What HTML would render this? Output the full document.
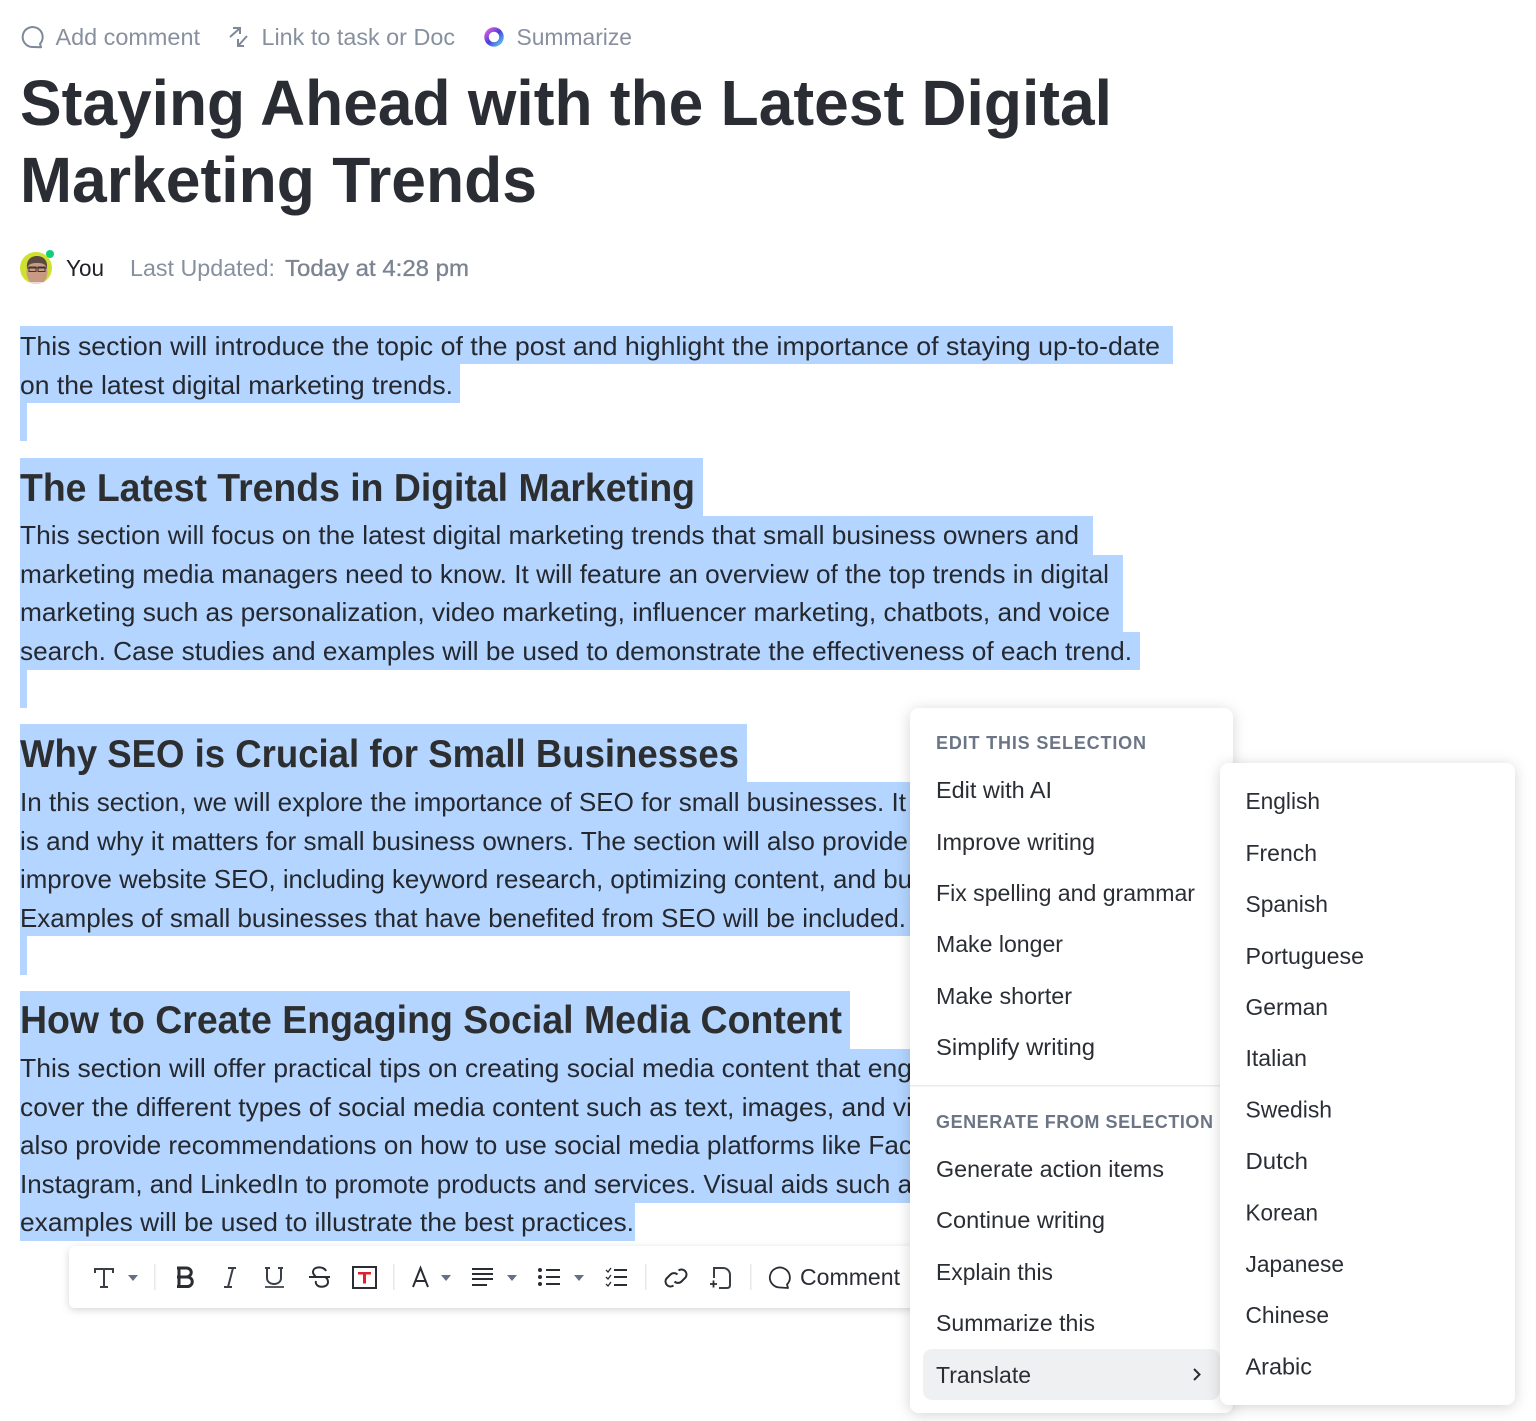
<!DOCTYPE html>
<html lang="en"><head><meta charset="utf-8"><title>Staying Ahead</title>
<style>
html,body{margin:0;padding:0;background:#fff;width:1536px;height:1421px;overflow:hidden}
svg{display:block}
text{font-family:"Liberation Sans",sans-serif}
.b{font-size:26px;fill:#25282e}
.h{font-size:39px;font-weight:700;fill:#2d2e30}
.t{font-size:64px;font-weight:700;fill:#2a2e34}
.g{font-size:23px;fill:#87909e}
.m{font-size:23px;fill:#2a2e34}
.c{font-size:18px;font-weight:700;fill:#6b7586}
</style></head><body>
<svg width="1536" height="1421" viewBox="0 0 1536 1421" xmlns="http://www.w3.org/2000/svg">
<defs>
<filter id="sh" x="-15%" y="-15%" width="130%" height="130%"><feDropShadow dx="0" dy="2" stdDeviation="7" flood-color="#000" flood-opacity=".17"/></filter>
<filter id="sb" x="-5%" y="-30%" width="110%" height="170%"><feDropShadow dx="0" dy="2" stdDeviation="4" flood-color="#000" flood-opacity=".16"/></filter>
<linearGradient id="ai" x1="0" y1="0" x2="1" y2="1"><stop offset="0" stop-color="#e35fe0"/><stop offset=".5" stop-color="#4a3fd8"/><stop offset="1" stop-color="#57c8f2"/></linearGradient>
<clipPath id="av"><circle cx="36" cy="268" r="16"/></clipPath>
</defs>
<rect width="1536" height="1421" fill="#fff"/>

<!-- top actions -->
<path d="M33 47a10 10 0 1 1 7-3.200l1 3.500z" fill="none" stroke="#7f8897" stroke-width="2" stroke-linejoin="round"/>
<text class="g" x="55.500" y="45" textLength="144.500" lengthAdjust="spacingAndGlyphs">Add comment</text>
<path d="M230 37l9-8M233 28h7v6M247 36l-9 10M238 39v7h6" fill="none" stroke="#7f8897" stroke-width="2"/>
<text class="g" x="261.500" y="45" textLength="193.500" lengthAdjust="spacingAndGlyphs">Link to task or Doc</text>
<circle cx="494" cy="37" r="7.500" fill="none" stroke="url(#ai)" stroke-width="4.500"/>
<text class="g" x="516.500" y="45" textLength="115.500" lengthAdjust="spacingAndGlyphs">Summarize</text>

<!-- title -->
<text class="t" x="20" y="125" textLength="1092" lengthAdjust="spacingAndGlyphs">Staying Ahead with the Latest Digital</text>
<text class="t" x="20" y="202" textLength="517" lengthAdjust="spacingAndGlyphs">Marketing Trends</text>

<!-- author -->
<circle cx="36" cy="268" r="16" fill="#cfe030"/>
<g clip-path="url(#av)">
<ellipse cx="37" cy="272" rx="10.500" ry="13" fill="#c99a82"/>
<path d="M27 268c-1-9 5-12 10-12s11 3 10 12c-2-4-4-5-10-5s-8 1-10 5z" fill="#5a4a40"/>
<path d="M27 268h20" stroke="#3a3636" stroke-width="1"/>
<rect x="29" y="267" width="7" height="4.500" fill="none" stroke="#3a3636" stroke-width="1"/><rect x="38" y="267" width="7" height="4.500" fill="none" stroke="#3a3636" stroke-width="1"/>
<path d="M26 282h22v3H26z" fill="#e8dcd6"/>
</g>
<circle cx="50" cy="254" r="4" fill="#0fcf7c"/>
<text x="66" y="276" font-size="23" fill="#1f2126" textLength="38" lengthAdjust="spacingAndGlyphs">You</text>
<text class="g" x="130" y="276" textLength="145" lengthAdjust="spacingAndGlyphs">Last Updated:</text>
<text x="285" y="276" font-size="23" fill="#7c8492" stroke="#7c8492" stroke-width=".35" textLength="184" lengthAdjust="spacingAndGlyphs">Today at 4:28 pm</text>

<!-- selection -->
<g fill="#b3d5ff">
<rect x="20" y="326" width="1153" height="38"/>
<rect x="20" y="364" width="440" height="39"/>
<rect x="20" y="403" width="7" height="38"/>
<rect x="20" y="458" width="683" height="58"/>
<rect x="20" y="516" width="1073" height="39"/>
<rect x="20" y="555" width="1103" height="77"/>
<rect x="20" y="632" width="1120" height="38"/>
<rect x="20" y="670" width="7" height="38"/>
<rect x="20" y="724" width="727" height="58"/>
<rect x="20" y="782" width="900" height="154"/>
<rect x="20" y="936" width="7" height="39"/>
<rect x="20" y="991" width="830" height="58"/>
<rect x="20" y="1049" width="900" height="154"/>
<rect x="20" y="1203" width="615" height="38"/>
</g>

<!-- body -->
<text class="b" x="20" y="355" textLength="1140" lengthAdjust="spacingAndGlyphs">This section will introduce the topic of the post and highlight the importance of staying up-to-date</text>
<text class="b" x="20" y="394" textLength="433" lengthAdjust="spacingAndGlyphs">on the latest digital marketing trends.</text>
<text class="h" x="20" y="501" textLength="675" lengthAdjust="spacingAndGlyphs">The Latest Trends in Digital Marketing</text>
<text class="b" x="20" y="544" textLength="1059" lengthAdjust="spacingAndGlyphs">This section will focus on the latest digital marketing trends that small business owners and</text>
<text class="b" x="20" y="583" textLength="1089" lengthAdjust="spacingAndGlyphs">marketing media managers need to know. It will feature an overview of the top trends in digital</text>
<text class="b" x="20" y="621" textLength="1090" lengthAdjust="spacingAndGlyphs">marketing such as personalization, video marketing, influencer marketing, chatbots, and voice</text>
<text class="b" x="20" y="660" textLength="1112" lengthAdjust="spacingAndGlyphs">search. Case studies and examples will be used to demonstrate the effectiveness of each trend.</text>
<text class="h" x="20" y="767" textLength="719" lengthAdjust="spacingAndGlyphs">Why SEO is Crucial for Small Businesses</text>
<text class="b" x="20" y="811" textLength="886" lengthAdjust="spacingAndGlyphs">In this section, we will explore the importance of SEO for small businesses. It</text>
<text class="b" x="20" y="850" textLength="888" lengthAdjust="spacingAndGlyphs">is and why it matters for small business owners. The section will also provide</text>
<text class="b" x="20" y="888" textLength="892" lengthAdjust="spacingAndGlyphs">improve website SEO, including keyword research, optimizing content, and bu</text>
<text class="b" x="20" y="927" textLength="886" lengthAdjust="spacingAndGlyphs">Examples of small businesses that have benefited from SEO will be included.</text>
<text class="h" x="20" y="1033" textLength="822" lengthAdjust="spacingAndGlyphs">How to Create Engaging Social Media Content</text>
<text class="b" x="20" y="1077" textLength="892" lengthAdjust="spacingAndGlyphs">This section will offer practical tips on creating social media content that eng</text>
<text class="b" x="20" y="1116" textLength="892" lengthAdjust="spacingAndGlyphs">cover the different types of social media content such as text, images, and vi</text>
<text class="b" x="20" y="1154" textLength="892" lengthAdjust="spacingAndGlyphs">also provide recommendations on how to use social media platforms like Fac</text>
<text class="b" x="20" y="1193" textLength="892" lengthAdjust="spacingAndGlyphs">Instagram, and LinkedIn to promote products and services. Visual aids such a</text>
<text class="b" x="20" y="1231" textLength="614" lengthAdjust="spacingAndGlyphs">examples will be used to illustrate the best practices.</text>

<!-- toolbar -->
<rect x="69" y="1246" width="860" height="62" rx="6" fill="#fff" filter="url(#sb)"/>
<g fill="#e6e8eb">
<rect x="154" y="1264" width="1.500" height="26"/><rect x="393" y="1264" width="1.500" height="26"/><rect x="645" y="1264" width="1.500" height="26"/><rect x="750" y="1264" width="1.500" height="26"/>
</g>
<g fill="#667085">
<path d="M128 1275h10l-5 6z"/><path d="M441 1275h10l-5 6z"/><path d="M507 1275h10l-5 6z"/><path d="M574 1275h10l-5 6z"/>
</g>
<path d="M95 1273v-4h18v4M104 1269v18M100 1287h8" fill="none" stroke="#3a3f47" stroke-width="2"/>
<path d="M177 1268h9c7 0 7 8.500 0 9h-9M177 1277h10c7 0 7 9.500 0 9.500h-10M179 1268v18.500" fill="none" stroke="#2a2e34" stroke-width="3"/>
<path d="M228 1268h8M224 1287h8M233 1268l-5 19" fill="none" stroke="#3a3f47" stroke-width="2"/>
<path d="M267 1268v10c0 8 14 8 14 0v-10M265 1268h5M278 1268h5" fill="none" stroke="#3a3f47" stroke-width="2"/><rect x="265" y="1286" width="19" height="2" fill="#555b63"/>
<path d="M326 1271c-2-5-13-5-13 1 0 2 1 3 3 5M316 1281c-2 7 12 8 12 1 0-2-1-4-3-5M309 1277h21" fill="none" stroke="#2a2e34" stroke-width="2"/>
<rect x="353" y="1267" width="23" height="21" fill="none" stroke="#2a2e34" stroke-width="2"/>
<path d="M358 1272h13v2.500h-5v9h-3v-9h-5z" fill="#e0202c"/>
<path d="M413 1287l7.500-19 7.500 19M416 1281h10" fill="none" stroke="#2a2e34" stroke-width="2"/>
<path d="M472 1269h21M472 1274h21M472 1279h21M472 1285h15" fill="none" stroke="#2a2e34" stroke-width="2"/>
<g fill="#2a2e34"><circle cx="540" cy="1270" r="2"/><circle cx="540" cy="1277" r="2"/><circle cx="540" cy="1284" r="2"/></g>
<path d="M546 1270h14M546 1277h14M546 1284h14" fill="none" stroke="#2a2e34" stroke-width="2"/>
<path d="M606 1270l2 2 3-4M606 1277l2 2 3-4M606 1284l2 2 3-4" fill="none" stroke="#2a2e34" stroke-width="1.300"/>
<path d="M614 1270h13M614 1277h13M614 1285h13" fill="none" stroke="#2a2e34" stroke-width="2"/>
<path d="M678.500 1270.500a5 5 0 0 1 7 7l-4 4a5 5 0 0 1-7 0M673.500 1285.500a5 5 0 0 1-7-7l4-4a5 5 0 0 1 7 0" fill="none" stroke="#2a2e34" stroke-width="2"/>
<path d="M714 1278v-10h9c4 0 7 3 7 7v10c0 2-1 3-3 3h-8" fill="none" stroke="#3a3f47" stroke-width="2"/>
<path d="M713.500 1280.500v7M710 1284h7" fill="none" stroke="#2a2e34" stroke-width="1.800"/>
<path d="M780 1287.500a10 10 0 1 1 7-3l1 3.500z" fill="none" stroke="#2a2e34" stroke-width="1.800" stroke-linejoin="round"/>
<text x="800" y="1285" font-size="23" fill="#2a2e34" textLength="100" lengthAdjust="spacingAndGlyphs">Comment</text>

<!-- menu 1 -->
<rect x="910" y="708" width="323" height="705" rx="9" fill="#fff" filter="url(#sh)"/>
<text class="c" x="936" y="749" textLength="210" lengthAdjust="spacing">EDIT THIS SELECTION</text>
<text class="m" x="936" y="798" textLength="116" lengthAdjust="spacingAndGlyphs">Edit with AI</text>
<text class="m" x="936" y="850" textLength="159" lengthAdjust="spacingAndGlyphs">Improve writing</text>
<text class="m" x="936" y="901" textLength="259" lengthAdjust="spacingAndGlyphs">Fix spelling and grammar</text>
<text class="m" x="936" y="952" textLength="127" lengthAdjust="spacingAndGlyphs">Make longer</text>
<text class="m" x="936" y="1004" textLength="136" lengthAdjust="spacingAndGlyphs">Make shorter</text>
<text class="m" x="936" y="1055" textLength="159" lengthAdjust="spacingAndGlyphs">Simplify writing</text>
<rect x="910" y="1085" width="323" height="1.500" fill="#e8eaed"/>
<text class="c" x="936" y="1128" textLength="277" lengthAdjust="spacing">GENERATE FROM SELECTION</text>
<text class="m" x="936" y="1177" textLength="228" lengthAdjust="spacingAndGlyphs">Generate action items</text>
<text class="m" x="936" y="1228" textLength="169" lengthAdjust="spacingAndGlyphs">Continue writing</text>
<text class="m" x="936" y="1280" textLength="117" lengthAdjust="spacingAndGlyphs">Explain this</text>
<text class="m" x="936" y="1331" textLength="159" lengthAdjust="spacingAndGlyphs">Summarize this</text>
<rect x="923" y="1349" width="297" height="51" rx="9" fill="#eff0f2"/>
<text class="m" x="936" y="1383" textLength="95" lengthAdjust="spacingAndGlyphs">Translate</text>
<path d="M1194 1369l5.500 5.500-5.500 5.500" fill="none" stroke="#2a2e34" stroke-width="2"/>

<!-- menu 2 -->
<rect x="1220" y="763" width="295" height="642" rx="9" fill="#fff" filter="url(#sh)"/>
<text class="m" x="1245.500" y="809" textLength="74.500" lengthAdjust="spacingAndGlyphs">English</text>
<text class="m" x="1245.500" y="861" textLength="71.500" lengthAdjust="spacingAndGlyphs">French</text>
<text class="m" x="1245.500" y="912" textLength="82.500" lengthAdjust="spacingAndGlyphs">Spanish</text>
<text class="m" x="1245.500" y="964" textLength="118.500" lengthAdjust="spacingAndGlyphs">Portuguese</text>
<text class="m" x="1245.500" y="1015" textLength="82.500" lengthAdjust="spacingAndGlyphs">German</text>
<text class="m" x="1245.500" y="1066" textLength="61.500" lengthAdjust="spacingAndGlyphs">Italian</text>
<text class="m" x="1245.500" y="1117.500" textLength="86.500" lengthAdjust="spacingAndGlyphs">Swedish</text>
<text class="m" x="1245.500" y="1169" textLength="62.500" lengthAdjust="spacingAndGlyphs">Dutch</text>
<text class="m" x="1245.500" y="1220.500" textLength="72.500" lengthAdjust="spacingAndGlyphs">Korean</text>
<text class="m" x="1245.500" y="1272" textLength="98.500" lengthAdjust="spacingAndGlyphs">Japanese</text>
<text class="m" x="1245.500" y="1323" textLength="83.500" lengthAdjust="spacingAndGlyphs">Chinese</text>
<text class="m" x="1245.500" y="1374.500" textLength="66.500" lengthAdjust="spacingAndGlyphs">Arabic</text>
</svg>
</body></html>
